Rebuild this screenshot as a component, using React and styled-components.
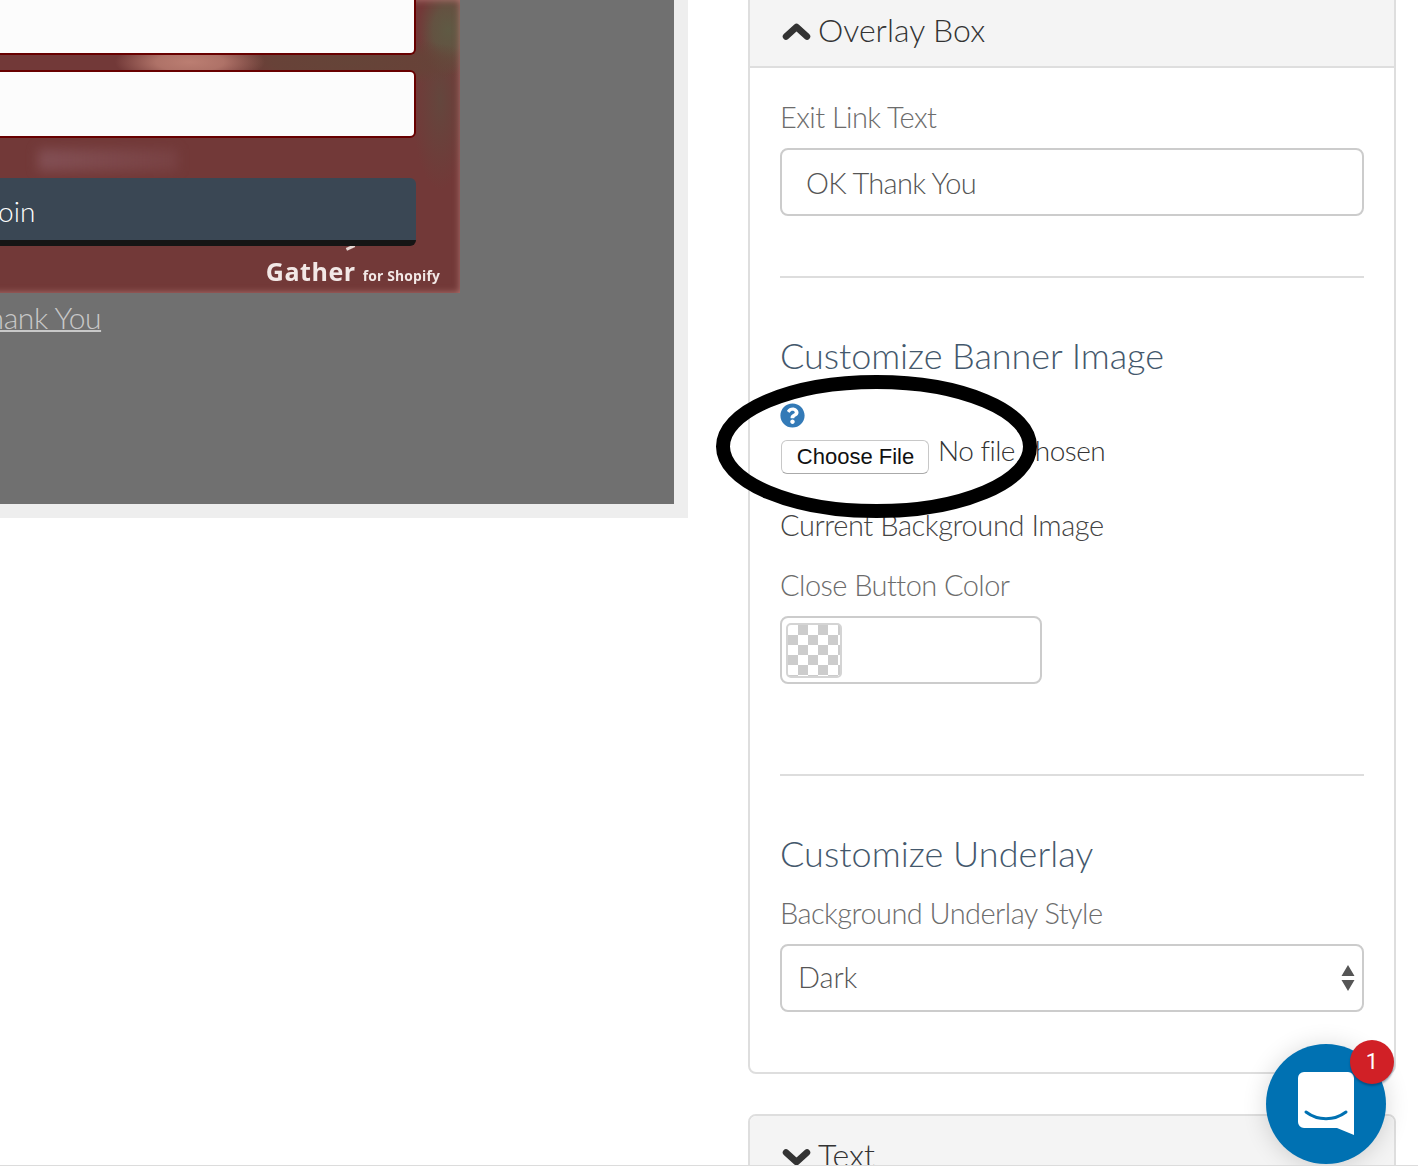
import React from "react";
import styled, { createGlobalStyle } from "styled-components";
import { FaQuestionCircle } from "react-icons/fa";

const Global = createGlobalStyle`
  html, body { margin: 0; padding: 0; background: #fff; overflow: hidden; }
  * { box-sizing: border-box; }
`;

const Page = styled.div`
  position: relative;
  width: 1418px;
  height: 1166px;
  overflow: hidden;
  display: flex;
  align-items: flex-start;
  border-bottom: 1px solid #dcdcdc;
  font-family: Lato, "Open Sans", sans-serif;
  font-weight: 300;
`;

const LeftColumn = styled.div`
  flex: none;
  width: 788px;
  margin-left: -100px;
  padding: 0 14px 14px 0;
  background: #eee;
`;

const Underlay = styled.div`
  height: 504px;
  background: #707070;
  display: flex;
  flex-direction: column;
`;

const Banner = styled.div`
  position: relative;
  width: 560px;
  height: 293px;
  padding: 0 44px 0 0;
  display: flex;
  flex-direction: column;
  justify-content: flex-end;
  overflow: hidden;
  box-shadow: inset 0 0 7px rgba(200, 140, 135, 0.75);
  background:
    radial-gradient(ellipse 75px 22px at 290px 62px, #bb7e72 0%, rgba(185, 124, 112, 0.85) 45%, rgba(185, 124, 112, 0) 100%),
    radial-gradient(ellipse 130px 26px at 450px 62px, #654438 0%, rgba(101, 68, 56, 0.8) 60%, rgba(101, 68, 56, 0) 100%),
    radial-gradient(ellipse 30px 45px at 548px 30px, #5f5a44 0%, rgba(95, 90, 68, 0.75) 50%, rgba(95, 90, 68, 0) 100%),
    radial-gradient(ellipse 28px 90px at 540px 100px, rgba(98, 72, 62, 0.9) 0%, rgba(98, 72, 62, 0) 100%),
    #723938;
`;

const BlurLine = styled.div`
  position: absolute;
  left: 138px;
  top: 149px;
  width: 140px;
  height: 22px;
  background: linear-gradient(90deg, rgba(140, 92, 100, 0.65), rgba(140, 92, 100, 0.25));
  filter: blur(6px);
`;

const StrayMark = styled.div`
  position: absolute;
  left: 446px;
  top: 246px;
  width: 9px;
  height: 3px;
  background: #e8d8d4;
  transform: rotate(-25deg);
  filter: blur(0.5px);
`;

const FormInput = styled.div`
  flex: none;
  height: ${(p) => p.$h}px;
  margin-bottom: ${(p) => p.$mb}px;
  background: #fcfcfc;
  border: 2px solid #680000;
  border-top-width: ${(p) => (p.$clip ? 0 : 2)}px;
  border-radius: ${(p) => (p.$clip ? "0 0 6px 6px" : "6px")};
`;

const JoinButton = styled.div`
  flex: none;
  height: 68px;
  margin-bottom: 47px;
  padding-left: 87px;
  background: #3a4754;
  border-bottom: 6px solid #151515;
  border-radius: 6px;
  color: #fff;
  font-size: 28px;
  font-weight: 300;
  line-height: 66px;
  z-index: 1;
`;

const Brand = styled.div`
  position: absolute;
  right: 20px;
  bottom: 5px;
  display: flex;
  align-items: baseline;
  gap: 7px;
  color: #f2e8e6;
  font-family: "Open Sans", sans-serif;
  font-weight: 700;
  filter: blur(0.7px);
`;

const BrandName = styled.span`
  font-size: 25px;
  letter-spacing: 0.55px;
`;

const BrandSub = styled.span`
  font-size: 13.8px;
  letter-spacing: 0.2px;
`;

const ExitLink = styled.a`
  margin: 5px 0 0 22px;
  color: #c8c8c8;
  font-size: 30px;
  line-height: 38px;
  text-decoration: underline;
  text-decoration-thickness: 2px;
  letter-spacing: -0.4px;
`;

const RightColumn = styled.div`
  flex: none;
  width: 648px;
  margin: 0 0 0 60px;
`;

const Panel = styled.section`
  margin-top: ${(p) => p.$top}px;
  border: 2px solid #dedede;
  border-radius: 8px;
  overflow: hidden;
  background: #fff;
`;

const PanelHeader = styled.header`
  display: flex;
  align-items: center;
  gap: 7px;
  height: ${(p) => p.$h}px;
  padding: 0 30px 0 32px;
  background: #f4f4f4;
  border-bottom: 2px solid #dedede;
  color: #333;
  font-size: 32px;
  svg { flex: none; margin-top: 6px; }
`;

const PanelBody = styled.div`
  padding: 30px 30px 0;
  height: 1004px;
`;

const Label = styled.div`
  color: ${(p) => (p.$dark ? "#444" : "#6c6c6c")};
  font-size: 29px;
  line-height: 38px;
  letter-spacing: ${(p) => (p.$dark ? -0.42 : -0.56)}px;
  margin-top: ${(p) => p.$mt || 0}px;
`;

const TextField = styled.div`
  height: 68px;
  margin-top: 12px;
  padding: 2px 0 0 24px;
  border: 2px solid #ccc;
  border-radius: 8px;
  color: #555;
  font-size: 29px;
  line-height: 62px;
  letter-spacing: -0.65px;
`;

const Rule = styled.hr`
  margin: ${(p) => p.$mt}px 0 0;
  border: 0;
  border-top: 2px solid #ddd;
`;

const Heading = styled.h3`
  margin: ${(p) => p.$mt}px 0 0;
  color: #44586c;
  font-size: 36px;
  font-weight: 300;
  line-height: 44px;
  letter-spacing: ${(p) => p.$ls}px;
`;

const HelpIcon = styled(FaQuestionCircle)`
  display: block;
  width: 25px;
  height: 25px;
  margin-top: 26px;
  color: #337ab7;
`;

const FileRow = styled.div`
  display: flex;
  align-items: flex-start;
  gap: 9px;
  margin-top: 12px;
  padding-left: 1px;
  height: 34px;
`;

const FileButton = styled.button`
  width: 148px;
  height: 34px;
  padding: 0 0 0 1px;
  background: #fff;
  border: 1px solid #c8c8c8;
  border-bottom-color: #aaa;
  border-radius: 6px;
  color: #111;
  font-family: "Liberation Sans", Arial, sans-serif;
  font-size: 22px;
  line-height: 32px;
`;

const FileStatus = styled.span`
  color: #333;
  font-size: 28px;
  line-height: 20px;
  letter-spacing: -0.5px;
`;

const ColorField = styled.div`
  width: 262px;
  height: 68px;
  margin-top: 12px;
  padding: 5px 4px;
  border: 2px solid #ccc;
  border-radius: 8px;
`;

const Swatch = styled.div`
  width: 56px;
  height: 55px;
  border: 2px solid #d4d4d4;
  border-radius: 5px;
  background: repeating-conic-gradient(#ccc 0 25%, #fff 0 50%) 0 0 / 20px 20px;
`;

const SelectField = styled.div`
  display: flex;
  align-items: center;
  justify-content: space-between;
  height: 68px;
  margin-top: 12px;
  padding: 0 7px 0 16px;
  border: 2px solid #ccc;
  border-radius: 8px;
  color: #555;
  font-size: 29px;
  letter-spacing: -0.1px;
`;

const SelectValue = styled.span`
  padding-bottom: 4px;
`;

const Annotation = styled.svg`
  position: absolute;
  left: 716px;
  top: 375px;
  pointer-events: none;
`;

const ChatBubble = styled.div`
  position: absolute;
  left: 1266px;
  top: 1044px;
  width: 120px;
  height: 120px;
  display: flex;
  align-items: center;
  justify-content: center;
  border-radius: 50%;
  background: #0071b2;
  box-shadow: 0 2px 24px rgba(0, 0, 0, 0.16);
`;

const ChatBadge = styled.div`
  position: absolute;
  left: 84px;
  top: -4px;
  width: 44px;
  height: 44px;
  border-radius: 50%;
  background: #d12026;
  box-shadow: 0 2px 2px rgba(0, 40, 80, 0.4);
  color: #fff;
  font-family: Roboto, sans-serif;
  font-size: 22px;
  font-weight: 400;
  line-height: 44px;
  text-align: center;
`;

const Chevron = ({ down }) => (
  <svg width="29" height="18" viewBox="0 0 29 18" aria-hidden="true">
    <polyline
      points={down ? "4,4.5 14.5,14 25,4.5" : "4,13.5 14.5,4 25,13.5"}
      fill="none"
      stroke="#333"
      strokeWidth="6.5"
      strokeLinejoin="round"
      strokeLinecap="round"
    />
  </svg>
);

export default function App() {
  return (
    <>
      <Global />
      <Page>
        <LeftColumn>
          <Underlay>
            <Banner>
              <BlurLine />
              <StrayMark />
              <FormInput $clip $h={55} $mb={15} />
              <FormInput $h={68} $mb={40} />
              <JoinButton>Join</JoinButton>
              <Brand>
                <BrandName>Gather</BrandName>
                <BrandSub>for Shopify</BrandSub>
              </Brand>
            </Banner>
            <ExitLink>OK Thank You</ExitLink>
          </Underlay>
        </LeftColumn>
        <RightColumn>
          <Panel $top={-10}>
            <PanelHeader $h={76}>
              <Chevron />
              Overlay Box
            </PanelHeader>
            <PanelBody>
              <Label>Exit Link Text</Label>
              <TextField>OK Thank You</TextField>
              <Rule $mt={60} />
              <Heading $mt={55} $ls={-0.05}>Customize Banner Image</Heading>
              <HelpIcon />
              <FileRow>
                <FileButton>Choose File</FileButton>
                <FileStatus>No file chosen</FileStatus>
              </FileRow>
              <Label $dark $mt={32}>Current Background Image</Label>
              <Label $mt={22}>Close Button Color</Label>
              <ColorField>
                <Swatch />
              </ColorField>
              <Rule $mt={90} />
              <Heading $mt={55} $ls={0.05}>Customize Underlay</Heading>
              <Label $mt={19}>Background Underlay Style</Label>
              <SelectField>
                <SelectValue>Dark</SelectValue>
                <svg width="14" height="26" viewBox="0 0 14 26" aria-hidden="true">
                  <path d="M7 0 L13.5 11 H0.5 Z M0.5 15 H13.5 L7 26 Z" fill="#555" />
                </svg>
              </SelectField>
            </PanelBody>
          </Panel>
          <Panel $top={40}>
            <PanelHeader $h={78}>
              <Chevron down />
              Text
            </PanelHeader>
          </Panel>
        </RightColumn>
        <Annotation width="322" height="144" viewBox="0 0 322 144" aria-hidden="true">
          <ellipse cx="160.5" cy="71.5" rx="153.5" ry="64.5" fill="none" stroke="#000" strokeWidth="14" />
        </Annotation>
        <ChatBubble>
          <svg width="56" height="64" viewBox="0 0 56 64" aria-hidden="true">
            <path d="M6 0 H50 a6 6 0 0 1 6 6 V63 L39 56 H6 a6 6 0 0 1 -6 -6 V6 a6 6 0 0 1 6 -6 Z" fill="#fff" />
            <path d="M8 40 C20 49 36 49 48 40" fill="none" stroke="#0071b2" strokeWidth="3" strokeLinecap="round" />
          </svg>
          <ChatBadge>1</ChatBadge>
        </ChatBubble>
      </Page>
    </>
  );
}
